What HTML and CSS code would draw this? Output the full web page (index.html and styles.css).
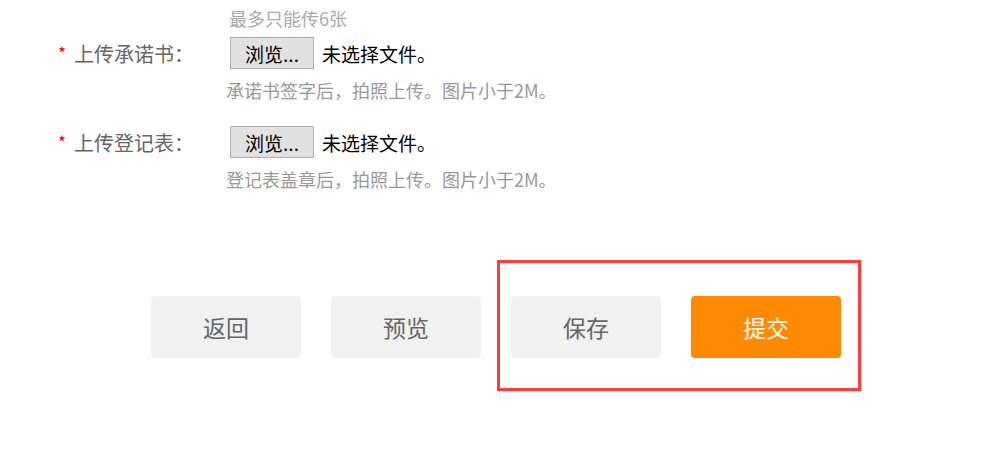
FILE: index.html
```html
<!DOCTYPE html>
<html lang="zh-CN">
<head>
<meta charset="utf-8">
<title>上传</title>
<link rel="stylesheet" href="styles.css">
</head>
<body>
<div class="page">
  <div class="form">
    <div class="note">最多只能传6张</div>
    <div class="row">
      <div class="label"><span class="star">*</span>上传承诺书：</div>
      <div class="file">
        <span class="file-btn">浏览...</span>
        <span class="file-name">未选择文件。</span>
      </div>
    </div>
    <div class="hint">承诺书签字后，拍照上传。图片小于2M。</div>
    <div class="row row-2">
      <div class="label"><span class="star">*</span>上传登记表：</div>
      <div class="file">
        <span class="file-btn">浏览...</span>
        <span class="file-name">未选择文件。</span>
      </div>
    </div>
    <div class="hint">登记表盖章后，拍照上传。图片小于2M。</div>
  </div>
  <div class="actions">
    <button class="btn">返回</button>
    <button class="btn">预览</button>
    <button class="btn">保存</button>
    <button class="btn btn-primary">提交</button>
  </div>
  <div class="highlight"></div>
</div>
</body>
</html>
```
FILE: styles.css
```css
* { box-sizing: border-box; }
html, body {
  margin: 0;
  padding: 0;
  background: #fff;
}
body {
  font-family: "Microsoft YaHei", "Noto Sans CJK SC", "Noto Sans", sans-serif;
  width: 989px;
  height: 464px;
  overflow: hidden;
}
.page {
  position: relative;
  width: 989px;
  height: 464px;
  padding-top: 8px;
}
.form {
  padding-left: 58px;
}
.note {
  margin-left: 171px;
  height: 20px;
  line-height: 20px;
  font-size: 18px;
  color: #aaa;
}
.row {
  display: flex;
  align-items: center;
  height: 32px;
  margin-top: 9px;
}
.row-2 {
  margin-top: 24px;
}
.label {
  width: 172px;
  font-size: 20px;
  color: #666;
  white-space: nowrap;
  line-height: 32px;
}
.star {
  color: #ff0000;
  font-size: 17px;
  margin-right: 8px;
  vertical-align: 2px;
}
.file {
  display: flex;
  align-items: center;
}
.file-btn {
  width: 84px;
  height: 32px;
  display: flex;
  align-items: center;
  justify-content: center;
  background: #e1e1e1;
  border: 1px solid #adadad;
  font-size: 19px;
  color: #000;
}
.file-name {
  margin-left: 8px;
  font-size: 19px;
  color: #000;
}
.hint {
  margin-left: 168px;
  margin-top: 9px;
  height: 24px;
  line-height: 24px;
  font-size: 18px;
  color: #999;
  white-space: nowrap;
}
.actions {
  display: flex;
  gap: 30px;
  padding-left: 151px;
  margin-top: 105px;
}
.btn {
  width: 150px;
  height: 62px;
  border: none;
  border-radius: 4px;
  background: #f1f1f1;
  color: #666;
  font-family: inherit;
  font-size: 23px;
  padding: 0;
  cursor: pointer;
}
.btn-primary {
  background: #ff8a00;
  color: #fff;
}
.highlight {
  position: absolute;
  left: 497px;
  top: 260px;
  width: 364px;
  height: 131px;
  border: 3px solid #ff3b3b;
  pointer-events: none;
}
```
